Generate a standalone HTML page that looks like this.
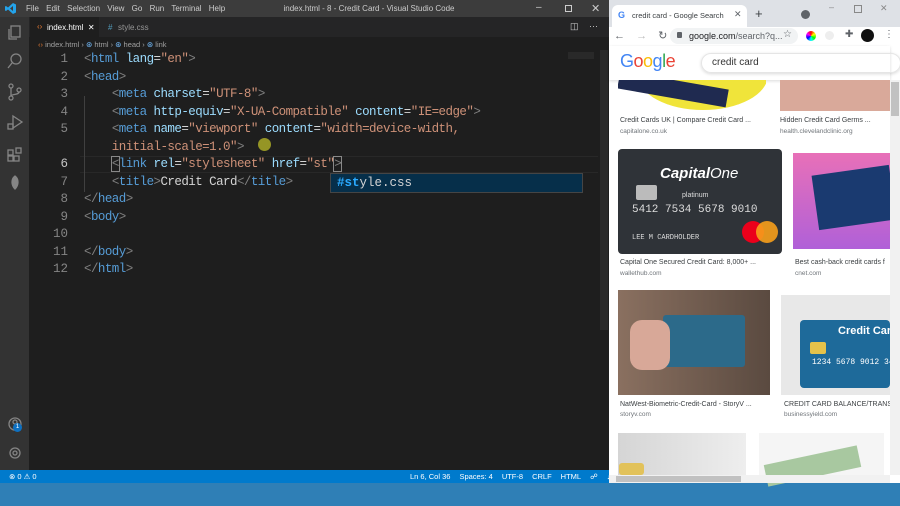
<!DOCTYPE html>
<html><head><meta charset="utf-8"><style>
*{margin:0;padding:0;box-sizing:border-box}
body{width:900px;height:506px;overflow:hidden;background:#2f7fb6;position:relative;font-family:"Liberation Sans",sans-serif}
.a{position:absolute}
.code{font-family:"Liberation Mono",monospace;font-size:12.5px;letter-spacing:-0.55px;white-space:pre;color:#d4d4d4}
.ln{color:#858585;width:38px;text-align:right;left:30px;letter-spacing:0}
.t{color:#569cd6}.p{color:#808080}.at{color:#9cdcfe}.s{color:#ce9178}
.ui{font-size:8px;color:#ccc}
.res{font-size:7px;color:#3c4043}
.src{font-size:6.5px;color:#70757a}
.sb span{margin-right:9px}
</style></head><body>
<!-- VS Code -->
<div class="a" style="left:0;top:0;width:609px;height:483px;background:#1e1e1e"></div>
<div class="a" style="left:0;top:0;width:609px;height:17px;background:#3c3c3c"></div>
<svg class="a" style="left:5px;top:3px" width="11" height="11" viewBox="0 0 11 11"><path d="M8 0L11 1.5V9.5L8 11L3 6.5L1 8L0 7.5V3.5L1 3L3 4.5ZM8 3L5 5.5L8 8Z" fill="#23a3ea"/></svg>
<div class="a ui" style="left:26px;top:4px;word-spacing:5px">File Edit Selection View Go Run Terminal Help</div>
<div class="a ui" style="left:254px;top:4px;width:230px;text-align:center">index.html - 8 - Credit Card - Visual Studio Code</div>
<div class="a ui" style="left:536px;top:2px;font-size:10px">–</div>
<div class="a" style="left:565px;top:5px;width:7px;height:7px;border:1px solid #ccc"></div>
<div class="a ui" style="left:591px;top:2px;font-size:11px">✕</div>
<div class="a" style="left:0;top:17px;width:29px;height:453px;background:#333"></div>
<svg class="a" style="left:6px;top:22px" width="18" height="440" viewBox="0 0 18 440" fill="none" stroke="#858585" stroke-width="1.3">
<rect x="5" y="4" width="9" height="11"/><path d="M3 7v10h8"/>
<circle cx="10" cy="37" r="5"/><path d="M6 41l-4 5"/>
<circle cx="5" cy="64" r="2"/><circle cx="5" cy="76" r="2"/><circle cx="13" cy="68" r="2"/><path d="M5 66v8M13 70c0 3-8 2-8 4"/>
<path d="M7 94l9 6-9 6z"/><rect x="2" y="102" width="5" height="5"/>
<rect x="2" y="128" width="5" height="5"/><rect x="2" y="134" width="5" height="5"/><rect x="8" y="134" width="5" height="5"/><rect x="10" y="126" width="5" height="5"/>
<path d="M9 154c4 3 4 9 0 13c-4-4-4-10 0-13z" fill="#858585"/>
<circle cx="9" cy="402" r="6"/><circle cx="9" cy="400" r="2"/>
<circle cx="9" cy="431" r="5"/><circle cx="9" cy="431" r="2"/>
</svg>
<div class="a" style="left:13px;top:423px;width:9px;height:9px;border-radius:50%;background:#0e70c0;color:#fff;font-size:6px;text-align:center;line-height:9px">1</div>
<div class="a" style="left:29px;top:17px;width:580px;height:20px;background:#252526"></div>
<div class="a" style="left:30px;top:17px;width:69px;height:20px;background:#1e1e1e"></div>
<div class="a" style="left:37px;top:22px;font-size:8px;color:#e37933">‹›</div>
<div class="a" style="left:47px;top:23px;font-size:8px;color:#fff">index.html&nbsp; ✕</div>
<div class="a" style="left:108px;top:23px;font-size:8px;color:#519aba">#</div>
<div class="a" style="left:118px;top:23px;font-size:8px;color:#969696">style.css</div>
<div class="a ui" style="left:570px;top:21px;font-size:9px">◫</div>
<div class="a ui" style="left:589px;top:21px;font-size:9px">···</div>
<div class="a" style="left:38px;top:40px;font-size:7.5px;color:#a0a0a0"><span style="color:#e37933">‹›</span> index.html › <span style="color:#75beff">⊛</span> html › <span style="color:#75beff">⊛</span> head › <span style="color:#75beff">⊛</span> link</div>
<div class="a code ln" style="top:51px;line-height:17.5px">1
2
3
4
5

<span style="color:#c6c6c6">6</span>
7
8
9
10
11
12</div>
<div class="a" style="left:80px;top:156px;width:518px;height:17px;border-top:1px solid #282828;border-bottom:1px solid #282828"></div>
<div class="a" style="left:84px;top:96px;width:1px;height:96px;background:#404040"></div>
<div class="a code" style="left:84px;top:51px;line-height:17.5px"><span class="p">&lt;</span><span class="t">html</span> <span class="at">lang</span>=<span class="s">"en"</span><span class="p">&gt;</span>
<span class="p">&lt;</span><span class="t">head</span><span class="p">&gt;</span>
    <span class="p">&lt;</span><span class="t">meta</span> <span class="at">charset</span>=<span class="s">"UTF-8"</span><span class="p">&gt;</span>
    <span class="p">&lt;</span><span class="t">meta</span> <span class="at">http-equiv</span>=<span class="s">"X-UA-Compatible"</span> <span class="at">content</span>=<span class="s">"IE=edge"</span><span class="p">&gt;</span>
    <span class="p">&lt;</span><span class="t">meta</span> <span class="at">name</span>=<span class="s">"viewport"</span> <span class="at">content</span>=<span class="s">"width=device-width,</span>
<span class="s">    initial-scale=1.0"</span><span class="p">&gt;</span>
    <span class="p" style="outline:1px solid #888">&lt;</span><span class="t">link</span> <span class="at">rel</span>=<span class="s">"stylesheet"</span> <span class="at">href</span>=<span class="s">"st"</span><span class="p" style="outline:1px solid #888">&gt;</span>
    <span class="p">&lt;</span><span class="t">title</span><span class="p">&gt;</span>Credit Card<span class="p">&lt;/</span><span class="t">title</span><span class="p">&gt;</span>
<span class="p">&lt;/</span><span class="t">head</span><span class="p">&gt;</span>
<span class="p">&lt;</span><span class="t">body</span><span class="p">&gt;</span>

<span class="p">&lt;/</span><span class="t">body</span><span class="p">&gt;</span>
<span class="p">&lt;/</span><span class="t">html</span><span class="p">&gt;</span></div>
<div class="a" style="left:258px;top:138px;width:13px;height:13px;border-radius:50%;background:rgba(200,200,40,.7)"></div>
<div class="a code" style="left:330px;top:173px;width:253px;height:20px;background:#062f4a;border:1px solid #454545;line-height:18px;padding-left:6px;font-size:12.5px;letter-spacing:0"><span style="color:#2aaaff;font-weight:bold">#st</span>yle.css</div>
<div class="a" style="left:568px;top:52px;width:26px;height:7px;background:#3a3a3a;opacity:.4"></div>
<div class="a" style="left:600px;top:50px;width:8px;height:280px;background:#2a2a2a"></div>
<div class="a" style="left:0;top:470px;width:609px;height:13px;background:#007acc"></div>
<div class="a" style="left:9px;top:472px;font-size:7.5px;color:#fff">⊗ 0 ⚠ 0</div>
<div class="a sb" style="left:410px;top:472px;font-size:7.5px;color:#fff;white-space:nowrap"><span>Ln 6, Col 36</span><span>Spaces: 4</span><span>UTF-8</span><span>CRLF</span><span>HTML</span><span>☍</span><span>♫</span></div>
<!-- Chrome -->
<div class="a" style="left:609px;top:0;width:291px;height:483px;background:#fff"></div>
<div class="a" style="left:609px;top:0;width:291px;height:27px;background:#dee1e6"></div>
<div class="a" style="left:612px;top:5px;width:135px;height:22px;background:#fff;border-radius:6px 6px 0 0"></div>
<div class="a" style="left:618px;top:10px;font-size:9px;font-weight:bold;color:#4285f4">G</div>
<div class="a" style="left:632px;top:11px;font-size:7.5px;color:#3c4043">credit card - Google Search</div>
<div class="a" style="left:734px;top:9px;font-size:9px;color:#5f6368">✕</div>
<div class="a" style="left:755px;top:6px;font-size:13px;color:#3c4043">+</div>
<div class="a" style="left:801px;top:10px;width:9px;height:9px;border-radius:50%;background:#5f6368"></div>
<div class="a" style="left:829px;top:2px;font-size:9px;color:#888">–</div>
<div class="a" style="left:854px;top:5px;width:8px;height:8px;border:1px solid #888"></div>
<div class="a" style="left:880px;top:3px;font-size:9px;color:#888">✕</div>
<div class="a" style="left:614px;top:29px;font-size:11px;color:#5f6368;word-spacing:8px">← <span style="color:#bbb">→</span> ↻</div>
<div class="a" style="left:670px;top:28px;width:128px;height:16px;border-radius:8px;background:#f1f3f4"></div>
<div class="a" style="left:677px;top:32px;width:5px;height:6px;background:#5f6368;border-radius:1px"></div>
<div class="a" style="left:689px;top:31px;font-size:9px;color:#202124">google.com<span style="color:#5f6368">/search?q...</span></div>
<div class="a" style="left:783px;top:29px;font-size:10px;color:#5f6368">☆</div>
<div class="a" style="left:806px;top:31px;width:10px;height:10px;border-radius:50%;background:conic-gradient(red,yellow,lime,cyan,blue,magenta,red)"></div>
<div class="a" style="left:825px;top:31px;width:9px;height:9px;border-radius:50%;background:#eee"></div>
<div class="a" style="left:845px;top:29px;font-size:10px;color:#5f6368">✚</div>
<div class="a" style="left:861px;top:29px;width:13px;height:13px;border-radius:50%;background:#111"></div>
<div class="a" style="left:884px;top:29px;font-size:10px;color:#5f6368">⋮</div>
<div class="a" style="left:609px;top:46px;width:281px;height:34px;background:#fff;box-shadow:0 1px 3px rgba(0,0,0,.15)"></div>
<div class="a" style="left:620px;top:51px;font-size:18px;letter-spacing:-0.5px"><span style="color:#4285f4">G</span><span style="color:#ea4335">o</span><span style="color:#fbbc05">o</span><span style="color:#4285f4">g</span><span style="color:#34a853">l</span><span style="color:#ea4335">e</span></div>
<div class="a" style="left:701px;top:53px;width:200px;height:20px;border-radius:10px;border:1px solid #e5e5e5;box-shadow:0 1px 3px rgba(0,0,0,.15)"></div>
<div class="a" style="left:712px;top:57px;font-size:10px;color:#333">credit card</div>
<!-- results -->
<div class="a" style="left:618px;top:80px;width:148px;height:31px;background:#fff;overflow:hidden"><div class="a" style="left:20px;top:-40px;width:130px;height:70px;border-radius:50%;background:#f0e43a"></div><div class="a" style="left:0;top:0;width:110px;height:18px;background:#1f2a50;transform:rotate(10deg)"></div></div>
<div class="a" style="left:780px;top:80px;width:110px;height:31px;background:#d9a99a"></div>
<div class="a res" style="left:620px;top:117px">Credit Cards UK | Compare Credit Card ...</div>
<div class="a src" style="left:620px;top:128px">capitalone.co.uk</div>
<div class="a res" style="left:780px;top:117px">Hidden Credit Card Germs ...</div>
<div class="a src" style="left:780px;top:128px">health.clevelandclinic.org</div>
<div class="a" style="left:618px;top:149px;width:164px;height:105px;background:#2f3338;border-radius:4px"></div>
<div class="a" style="left:660px;top:165px;font-size:15px;font-weight:bold;font-style:italic;color:#fff">Capital<span style="font-weight:normal">One</span></div>
<div class="a" style="left:636px;top:185px;width:21px;height:15px;background:#bbb;border-radius:2px"></div>
<div class="a" style="left:682px;top:192px;font-size:7px;color:#ddd">platinum</div>
<div class="a" style="left:632px;top:204px;font-family:'Liberation Mono',monospace;font-size:11px;color:#ddd">5412 7534 5678 9010</div>
<div class="a" style="left:632px;top:234px;font-family:'Liberation Mono',monospace;font-size:7px;color:#ddd">LEE M CARDHOLDER</div>
<div class="a" style="left:742px;top:221px;width:22px;height:22px;border-radius:50%;background:#eb001b"></div>
<div class="a" style="left:756px;top:221px;width:22px;height:22px;border-radius:50%;background:rgba(247,158,27,.9)"></div>
<div class="a" style="left:793px;top:153px;width:97px;height:96px;background:linear-gradient(#e870b8,#b060d8)"></div>
<div class="a" style="left:815px;top:170px;width:78px;height:55px;background:#1a3a70;transform:rotate(-8deg)"></div>
<div class="a res" style="left:620px;top:259px">Capital One Secured Credit Card: 8,000+ ...</div>
<div class="a src" style="left:620px;top:270px">wallethub.com</div>
<div class="a res" style="left:795px;top:259px">Best cash-back credit cards f</div>
<div class="a src" style="left:795px;top:270px">cnet.com</div>
<div class="a" style="left:618px;top:290px;width:152px;height:105px;background:linear-gradient(90deg,#8a7060,#5a4a40)"></div>
<div class="a" style="left:663px;top:315px;width:82px;height:52px;background:#2c6a8a;border-radius:3px"></div>
<div class="a" style="left:630px;top:320px;width:40px;height:50px;background:#d8a898;border-radius:12px"></div>
<div class="a" style="left:781px;top:295px;width:109px;height:100px;background:#e8e8e8"></div>
<div class="a" style="left:800px;top:320px;width:90px;height:68px;background:#1e6a9a;border-radius:4px"></div>
<div class="a" style="left:838px;top:325px;font-size:11px;font-weight:bold;color:#fff">Credit Car</div>
<div class="a" style="left:810px;top:342px;width:16px;height:12px;background:#e6c24a;border-radius:2px"></div>
<div class="a" style="left:812px;top:358px;font-family:'Liberation Mono',monospace;font-size:8px;color:#fff">1234 5678 9012 34</div>
<div class="a res" style="left:620px;top:401px">NatWest-Biometric-Credit-Card - StoryV ...</div>
<div class="a src" style="left:620px;top:411px">storyv.com</div>
<div class="a res" style="left:784px;top:401px">CREDIT CARD BALANCE/TRANSI</div>
<div class="a src" style="left:784px;top:411px">businessyield.com</div>
<div class="a" style="left:618px;top:433px;width:128px;height:42px;background:linear-gradient(90deg,#d5d5d5,#eee)"></div>
<div class="a" style="left:619px;top:463px;width:25px;height:12px;background:#e2c25a;border-radius:3px"></div>
<div class="a" style="left:759px;top:433px;width:125px;height:42px;background:#f5f5f5"></div>
<div class="a" style="left:765px;top:455px;width:95px;height:22px;background:#a8c8a0;transform:rotate(-12deg)"></div>
<div class="a" style="left:890px;top:80px;width:10px;height:395px;background:#f1f1f1"></div>
<div class="a" style="left:891px;top:82px;width:8px;height:34px;background:#c1c1c1"></div>
<div class="a" style="left:609px;top:475px;width:281px;height:8px;background:#f1f1f1"></div>
<div class="a" style="left:616px;top:476px;width:125px;height:6px;background:#c1c1c1"></div>
</body></html>
